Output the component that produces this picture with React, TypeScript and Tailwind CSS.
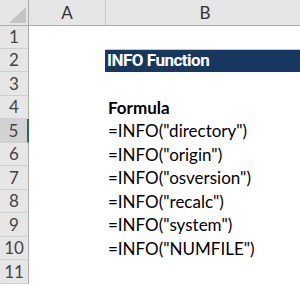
import React from "react";

const rows: { h: string; b?: React.ReactNode; sel?: boolean }[] = [
  { h: "h-[23px]" },
  { h: "h-[23px]", b: "band" },
  { h: "h-[24px]" },
  { h: "h-[23px]", b: <span className="font-bold">Formula</span> },
  { h: "h-[24px]", b: '=INFO("directory")', sel: true },
  { h: "h-[23px]", b: '=INFO("origin")' },
  { h: "h-[24px]", b: '=INFO("osversion")' },
  { h: "h-[23px]", b: '=INFO("recalc")' },
  { h: "h-[24px]", b: '=INFO("system")' },
  { h: "h-[23px]", b: '=INFO("NUMFILE")' },
  { h: "h-[24px]" },
];

export default function App() {
  return (
    <div
      className="w-[300px] h-[285px] overflow-hidden bg-white text-[17px] text-black"
      style={{ fontFamily: "Lato, 'Open Sans', sans-serif" }}
    >
      <div className="flex h-[26px] bg-[#e6e6e6] border-b border-[#ababab]">
        <div className="relative w-[29px] shrink-0 border-r border-[#ababab]">
          <svg className="absolute left-[9px] top-[7px]" width="17" height="16" viewBox="0 0 17 16">
            <polygon points="17,0 17,16 0,16" fill="#c4c4c4" />
          </svg>
        </div>
        <div className="w-[77px] shrink-0 flex items-center justify-center border-r border-[#c8c8c8] text-[#333] pt-[1px]">A</div>
        <div className="w-[198px] shrink-0 flex items-center justify-center text-[#333] pt-[1px]">B</div>
      </div>
      {rows.map((r, i) => (
        <div key={i} className={`flex ${r.h}`}>
          <div
            className={`w-[29px] shrink-0 flex items-center justify-center border-b border-[#cfcfcf] text-[#444] ${
              r.sel ? "bg-[#d2d2d2] border-r-2 border-r-[#217346]" : "bg-[#e6e6e6] border-r border-r-[#ababab]"
            }`}
          >
            {i + 1}
          </div>
          <div className="w-[76px] shrink-0" />
          <div className="flex-1 flex items-center">
            {r.b === "band" ? (
              <div
                className="h-full w-full bg-[#17375e] border-t border-[#c8c8c8] flex items-center pl-[2px] font-bold text-white text-[17px] tracking-[-0.5px]"
                style={{ fontFamily: "Roboto, Lato, sans-serif" }}
              >
                INFO Function
              </div>
            ) : (
              <span className="pl-[3px] whitespace-nowrap">{r.b}</span>
            )}
          </div>
        </div>
      ))}
    </div>
  );
}
